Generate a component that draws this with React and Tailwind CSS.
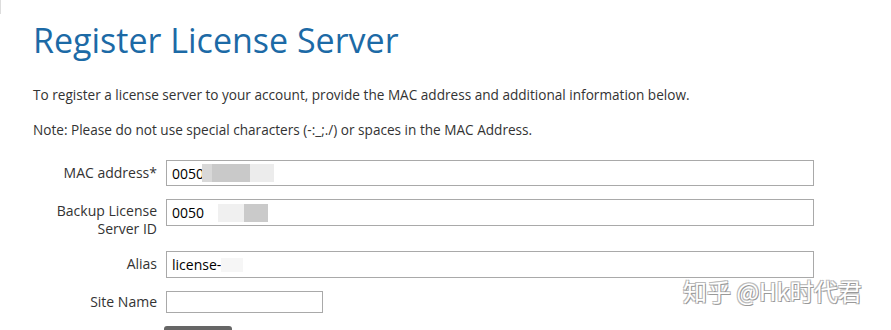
import React from 'react';

function Field({ label, children, labelClass = '' }) {
  return (
    <div className="flex items-start">
      <div className={`w-[124px] shrink-0 text-right text-[14px] leading-[18px] text-[#333] ${labelClass}`}>{label}</div>
      <div className="ml-[9px]">{children}</div>
    </div>
  );
}

export default function App() {
  return (
    <div className="relative w-[891px] h-[330px] overflow-hidden bg-white font-['Open_Sans',sans-serif]">
      <div className="absolute left-0 top-0 h-[14px] w-px bg-[#ddd]" />
      <div className="pl-[33px] pt-[18px]">
        <h1 className="text-[34px] font-medium leading-[44px] text-[#1c6aa6]">Register License Server</h1>
        <p className="mt-[24px] text-[13.6px] leading-[18px] text-[#333]">
          To register a license server to your account, provide the MAC address and additional information below.
        </p>
        <p className="mt-[17px] text-[13.6px] leading-[18px] text-[#333]">
          Note: Please do not use special characters (-:_;./) or spaces in the MAC Address.
        </p>

        <div className="mt-[21px] flex flex-col">
          <Field label="MAC address*" labelClass="pt-[4px]">
            <div className="flex h-[26px] w-[648px] items-center border border-[#a9a9a9] px-[5px] text-[14px] text-black">
              <span>0050</span>
              <span className="ml-[-2px] h-[18px] w-[10px] bg-[#d8d8d8]" />
              <span className="h-[18px] w-[38px] bg-[#c9c9c9]" />
              <span className="h-[18px] w-[24px] bg-[#ececec]" />
            </div>
          </Field>
          <div className="h-[13px]" />
          <Field label={<>Backup License<br />Server ID</>} labelClass="pt-[3px]">
            <div className="flex h-[27px] w-[648px] items-center border border-[#a9a9a9] px-[5px] text-[14px] text-black">
              <span>0050</span>
              <span className="ml-[14px] h-[18px] w-[26px] bg-[#f0f0f0]" />
              <span className="h-[18px] w-[24px] bg-[#cacaca]" />
            </div>
          </Field>
          <div className="h-[13px]" />
          <Field label="Alias" labelClass="pt-[4px]">
            <div className="flex h-[27px] w-[648px] items-center border border-[#a9a9a9] px-[5px] text-[14px] text-black">
              <span>license-</span>
              <span className="h-[14px] w-[22px] bg-[#f6f6f6]" />
            </div>
          </Field>
          <div className="h-[13px]" />
          <Field label="Site Name" labelClass="pt-[2px]">
            <div className="h-[22px] w-[157px] border border-[#a9a9a9]" />
          </Field>
          <div className="ml-[131px] mt-[13px] h-[10px] w-[68px] rounded-t-[3px] bg-[#666]" />
        </div>
      </div>

      <div className="absolute left-[683px] top-[276px] text-[24px] leading-[30px] text-white font-['Noto_Sans_CJK_SC',sans-serif] [text-shadow:1px_1px_0_#999,-1px_-1px_0_#bbb,1px_-1px_0_#bbb,-1px_1px_0_#bbb]">
        知乎 @Hk时代君
      </div>
    </div>
  );
}
